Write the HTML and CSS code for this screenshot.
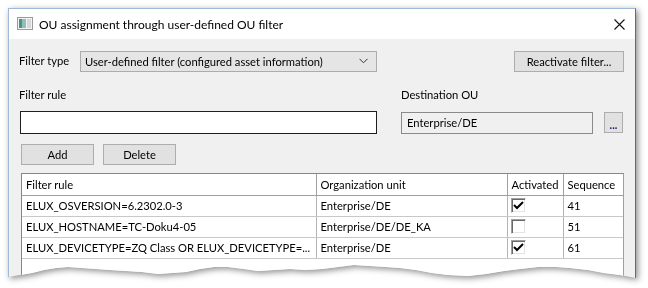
FILE: index.html
```html
<!DOCTYPE html>
<html>
<head>
<meta charset="utf-8">
<link rel="stylesheet" href="styles.css">
</head>
<body>
<div class="shadow">
  <div class="window">
    <div class="titlebar">
      <svg class="app-icon" width="16" height="13" viewBox="0 0 16 13">
        <rect x="0.5" y="0.5" width="15" height="12" fill="#f4f4f4" stroke="#9a9a9a"/>
        <rect x="2" y="2" width="7" height="9" fill="#4f8f8a"/>
        <rect x="5" y="2" width="4" height="9" fill="#8fc0b8"/>
        <rect x="10" y="2" width="4" height="9" fill="#d8d8d8"/>
      </svg>
      <span class="title">OU assignment through user-defined OU filter</span>
      <svg class="close" width="11" height="11" viewBox="0 0 11 11">
        <path d="M0.5 0.5 L10.5 10.5 M10.5 0.5 L0.5 10.5" stroke="#111" stroke-width="1.1"/>
      </svg>
    </div>
    <div class="content">
      <div class="row row1">
        <span class="label lbl-type">Filter type</span>
        <div class="combo">
          <span>User-defined filter (configured asset information)</span>
          <svg width="9" height="6" viewBox="0 0 9 6"><path d="M0.5 0.8 L4.5 4.8 L8.5 0.8" fill="none" stroke="#333" stroke-width="1"/></svg>
        </div>
        <div class="btn btn-reactivate">Reactivate filter...</div>
      </div>
      <div class="row row2">
        <span class="label lbl-rule">Filter rule</span>
        <span class="label">Destination OU</span>
      </div>
      <div class="row row3">
        <div class="input"></div>
        <div class="dest">Enterprise/DE</div>
        <div class="btn btn-dots">...</div>
      </div>
      <div class="row row4">
        <div class="btn btn-small">Add</div>
        <div class="btn btn-small">Delete</div>
      </div>
      <div class="grid-wrap">
        <table class="grid">
          <colgroup>
            <col class="c1"><col class="c2"><col class="c3"><col class="c4">
          </colgroup>
          <thead>
            <tr><th>Filter rule</th><th>Organization unit</th><th>Activated</th><th>Sequence</th></tr>
          </thead>
          <tbody>
            <tr><td>ELUX_OSVERSION=6.2302.0-3</td><td>Enterprise/DE</td><td><span class="cb checked"><svg width="11" height="9" viewBox="0 0 11 9"><path d="M1 4 L4 7 L10 1" fill="none" stroke="#000" stroke-width="2"/></svg></span></td><td>41</td></tr>
            <tr><td>ELUX_HOSTNAME=TC-Doku4-05</td><td>Enterprise/DE/DE_KA</td><td><span class="cb"></span></td><td>51</td></tr>
            <tr><td>ELUX_DEVICETYPE=ZQ Class OR ELUX_DEVICETYPE=...</td><td>Enterprise/DE</td><td><span class="cb checked"><svg width="11" height="9" viewBox="0 0 11 9"><path d="M1 4 L4 7 L10 1" fill="none" stroke="#000" stroke-width="2"/></svg></span></td><td>61</td></tr>
          </tbody>
        </table>
      </div>
    </div>
  </div>
</div>
</body>
</html>
```
FILE: styles.css
```css
* { box-sizing: border-box; }
html, body { margin: 0; padding: 0; background: #fff; }
body {
  font-family: "Lato", "Noto Sans", sans-serif;
  font-size: 11.2px;
  color: #000;
  width: 648px;
  height: 288px;
  overflow: hidden;
}
.shadow {
  padding: 8px 0 0 8px;
  filter: drop-shadow(2px 2px 3px rgba(0,0,0,0.45));
}
.window {
  width: 628px;
  height: 280px;
  background: #f0f0f0;
  border: 1px solid #9fb9d6;
  border-right-color: #1a7fd4;
  border-bottom: none;
  clip-path: polygon(-20px -20px, 650px -20px, 650px 272px,
    628px 270px, 612px 267px, 596px 265px, 580px 262px, 562px 260px, 548px 259px, 530px 259px, 512px 261px,
    496px 263px, 478px 266px, 460px 268px, 440px 267px, 424px 265px, 408px 262px, 392px 260px,
    378px 259px, 362px 258px, 346px 257px, 330px 259px, 314px 261px, 298px 262px, 282px 261px,
    266px 262px, 250px 263px, 236px 261px, 220px 259px, 206px 259px, 192px 261px, 178px 264px,
    164px 265px, 150px 266px, 134px 264px, 118px 263px, 102px 262px, 88px 261px, 74px 260px,
    60px 259px, 48px 260px, 36px 262px, 24px 265px, 12px 267px, 0px 269px, -20px 270px);
}
.titlebar {
  height: 30px;
  background: #fff;
  display: flex;
  align-items: center;
  padding-left: 8px;
}
.app-icon { margin-right: 6px; margin-top: -1px; }
.title { font-size: 12px; }
.close { margin-left: auto; margin-right: 10px; margin-top: 1px; }
.content {
  padding: 11px 0 0 10px;
}
.row { display: flex; align-items: center; white-space: nowrap; }
.label { line-height: 16px; }
.row1 { height: 22px; }
.lbl-type { width: 61px; }
.combo {
  width: 297px;
  height: 21px;
  background: #e5e5e5;
  border: 1px solid #acacac;
  display: flex;
  align-items: center;
  justify-content: space-between;
  padding: 0 8px 0 4px;
}
.btn {
  background: #e1e1e1;
  border: 1px solid #adadad;
  display: flex;
  align-items: center;
  justify-content: center;
}
.btn-reactivate {
  width: 110px;
  height: 21px;
  margin-left: 137px;
}
.row2 { margin-top: 15px; height: 16px; }
.lbl-rule { width: 382px; }
.row3 { margin-top: 8px; height: 23px; }
.input {
  width: 357px;
  height: 23px;
  background: #fff;
  border: 1px solid #1e1e1e;
  margin-left: 1px;
}
.dest {
  width: 192px;
  height: 22px;
  margin-left: 24px;
  border: 1px solid #8a8a8a;
  background: #f0f0f0;
  padding-left: 5px;
  display: flex;
  align-items: center;
}
.btn-dots {
  width: 19px;
  height: 21px;
  margin-left: 11px;
  color: #20206a;
  font-weight: bold;
  font-size: 11px;
  padding-top: 3px;
}
.row4 { margin-top: 10px; height: 21px; gap: 9px; padding-left: 2px; }
.btn-small { width: 73px; height: 21px; }
.grid-wrap {
  margin-top: 8px;
  margin-left: 2px;
  width: 603px;
  height: 120px;
  background: #fff;
  border: 1px solid #828790;
  border-right: 1px solid #a0a0a0;
}
.grid {
  border-collapse: collapse;
  table-layout: fixed;
  width: 601px;
}
.c1 { width: 294px; }
.c2 { width: 191px; }
.c3 { width: 56px; }
.c4 { width: 60px; }
.grid th, .grid td {
  height: 21px;
  padding: 0 0 0 4px;
  text-align: left;
  font-weight: normal;
  white-space: nowrap;
  overflow: hidden;
  text-overflow: clip;
  border-right: 1px solid #b4b4b4;
  border-bottom: 1px solid #c8c8c8;
}
.grid th { border-right-color: #a0a0a0; border-bottom-color: #a0a0a0; }
.grid th:last-child, .grid td:last-child { border-right: none; }
.cb {
  display: flex;
  align-items: center;
  justify-content: center;
  width: 15px;
  height: 15px;
  border: 1px solid;
  border-color: #a0a0a0 #fff #fff #a0a0a0;
  box-shadow: inset 1px 1px 0 #696969, inset -1px -1px 0 #e3e3e3;
  background: #fff;
  margin-left: -1px;
}
```
